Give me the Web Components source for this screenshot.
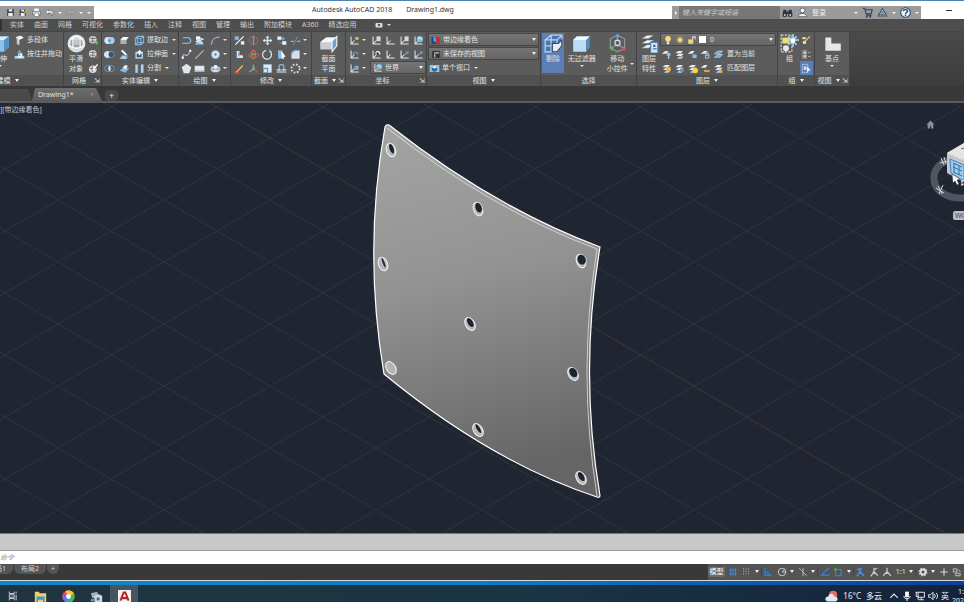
<!DOCTYPE html>
<html lang="zh-CN">
<head>
<meta charset="utf-8">
<title>Autodesk AutoCAD 2018 - Drawing1.dwg</title>
<style>
  body {
    margin: 0;
    min-height: 100vh;
    display: flex;
    flex-direction: column;
    overflow: hidden;
    background: #3a3a3a;
    color: #e2e2e2;
    font: 7px/10px "Noto Sans", "Noto Sans CJK SC", sans-serif;
  }
  cad-viewport { flex: 1; }
</style>
</head>
<body>
<cad-title-bar file="Drawing1.dwg">Autodesk AutoCAD 2018</cad-title-bar>
<cad-ribbon-tabs></cad-ribbon-tabs>
<cad-ribbon></cad-ribbon>
<cad-file-tabs>Drawing1*</cad-file-tabs>
<cad-viewport>][带边缘着色]</cad-viewport>
<cad-command-line></cad-command-line>
<cad-status-bar></cad-status-bar>
<win-taskbar></win-taskbar>

<script>
// all icons are drawn in a 16x16 box
const axes = '<path d="M3 2v11h11M3 13l5-5" fill="none" stroke="#dfe8ef" stroke-width="1.5"/>';
const sheets = '<path d="M2 6l4-3h7l-3 3zM3 10l4-3h7l-3 3z" fill="#e8e8e8"/><path d="M4 14l4-3h6l-3 3z" fill="#bcd"/>';
const icons = {
  save: '<path d="M2 2h12v12H2z" fill="#3f4850"/><path d="M5 2h6v4H5zM4 9h8v5H4z" fill="#e8eef2"/>',
  saveas: '<path d="M1 3h11v11H1z" fill="#3f4850"/><path d="M3 9h7v5H3zM4 3h5v3H4z" fill="#e8eef2"/><path d="M14 1l2 2-6 7-2 1 1-3z" fill="#e8a33c"/>',
  print: '<path d="M4 1h8v5H4z" fill="#fff"/><path d="M1 6h14v6H1z" fill="#e4e7ea" stroke="#4a5158"/><path d="M4 9h8v6H4z" fill="#fff" stroke="#5a6168"/>',
  undo: '<path d="M6 2L1 7l5 5V9c4-1 6 0 7 5 4-7-1-11-7-9z" fill="#f2f4f6" stroke="#4c555d"/>',
  redo: '<path d="M10 2l5 5-5 5V9c-4-1-6 0-7 5-4-7 1-11 7-9z" fill="#aaa" stroke="#828282"/>',
  glass: '<path d="M2 4h4l1 5v5H1V9zM10 4h4l1 5v5H9V9zM7 6h2v4H7z" fill="#2e343c"/><path d="M3 10h2v3H3zM11 10h2v3h-2z" fill="#ccd"/>',
  user: '<circle cx="8" cy="5" r="3.500" fill="#f3f5f7" stroke="#3b4652"/><path d="M2 14c0-6 12-6 12 0z" fill="#f3f5f7" stroke="#3b4652"/>',
  cart: '<path d="M1 2h3l2 8h7l2-6H5M6 12h8" fill="none" stroke="#28466b" stroke-width="1.600"/><circle cx="7" cy="14" r="1.500" fill="#28466b"/><circle cx="12" cy="14" r="1.500" fill="#28466b"/>',
  a360: '<path d="M8 2l6 11H2z" fill="#c7ced6" stroke="#34506f" stroke-width="1.500"/><path d="M2 9c4 4 9 4 12-1M8 6l-2 5h4z" fill="none" stroke="#34506f"/>',
  help: '<circle cx="8" cy="8" r="7" fill="#eef4fa" stroke="#28466b" stroke-width="1.500"/><path d="M5 6c0-3 6-3 6 0 0 2-3 2-3 4m0 1v2" fill="none" stroke="#28466b" stroke-width="2"/>',
  camera: '<rect x="1" y="4" width="14" height="9" rx="2" fill="#ddd"/><circle cx="8" cy="8" r="2.500" fill="#555"/>',
  extrude: '<path d="M1 5l4-3h10v9l-4 4H1z" fill="#8ec2ee"/><path d="M1 5l4-3h10l-4 3z" fill="#d8edfb"/><path d="M11 5l4-3v9l-4 4z" fill="#5590c4"/>',
  polysolid: '<path d="M3 3l7-2 4 3-6 3v8l-4-2V7z" fill="#c4ccd4"/><path d="M3 3l5 4 6-3-4-3z" fill="#f1f3f5"/>',
  presspull: '<path d="M1 10h14v4H1z" fill="#b5d4ee"/><path d="M6 6h6v7H6z" fill="#eef5fb"/><path d="M8 1l3 4H5zM7 5h2v5H7z" fill="#6fa8d8"/>',
  smooth: '<circle cx="8" cy="8" r="7.500" fill="#d9dcde"/><path d="M3 5h10v6H3z" fill="#9da3a8"/><path d="M2 8c0-8 12-8 12 0M5 2v9M11 2v9M1 9c4 4 10 4 14 0" fill="none" stroke="#fff" stroke-width="1"/><path d="M6 5h4v4H6z" fill="#c3c8cc"/>',
  meshadd: '<circle cx="7" cy="7" r="5.500" fill="#dedede"/><path d="M3 5h9M3 9h8M7 2v10" stroke="#555"/><path d="M10 11h5M12.500 9v5" stroke="#62c24c" stroke-width="2"/>',
  meshsub: '<circle cx="7" cy="7" r="5.500" fill="#dedede"/><path d="M3 5h9M3 9h8M7 2v10" stroke="#555"/><path d="M10 12h5" stroke="#d84b3c" stroke-width="2.500"/>',
  meshedit: '<circle cx="7" cy="9" r="5.500" fill="#dedede"/><path d="M3 8h8M6 4v9" stroke="#555"/><path d="M7 10l7-8" stroke="#fff" stroke-width="2"/>',
  union: '<ellipse cx="5.500" cy="8" rx="5" ry="5" fill="#d5e7f6"/><ellipse cx="10.500" cy="8" rx="5" ry="5" fill="#a9cdec"/><circle cx="8" cy="8" r="2" fill="#5c92c2"/>',
  subtract: '<circle cx="10.500" cy="8" r="4.500" fill="#38506a" stroke="#7fb0db"/><path d="M8 4a5 5 0 1 0 0 8c-2-2-2-6 0-8z" fill="#cfe3f4"/>',
  intersect: '<circle cx="5.500" cy="8" r="4.500" fill="none" stroke="#6fa6d6"/><circle cx="10.500" cy="8" r="4.500" fill="none" stroke="#6fa6d6"/><path d="M8 4c2 2 2 6 0 8-2-2-2-6 0-8z" fill="#e4f0fa"/>',
  slice: '<path d="M2 7l4-4h8l-3 4v6H2z" fill="#a8b2bb"/><path d="M2 7l4-4h8l-3 4z" fill="#fff"/>',
  thicken: '<path d="M1 14l4-5 9 2-4 4z" fill="#a9cdec"/><path d="M4 2l8 8" stroke="#fff" stroke-width="3"/><path d="M10 7l4 3-3 3z" fill="#4b85b8"/>',
  imprint: '<path d="M1 11l6-5 8 2-6 6z" fill="#88b6de"/><path d="M5 7l4-4 4 1-3 5z" fill="#eef4fa"/>',
  edges: '<path d="M2 5h8v9H2zM5 2h9v9h-9zM2 5l3-3M10 5l4-3M10 14l4-3M2 14l3-3" fill="none" stroke="#7fb7e6" stroke-width="1.500"/>',
  extface: '<path d="M2 4h11v10H2z" fill="#b9d8f2"/><path d="M4 7h7v5H4z" fill="#40566c"/><path d="M8 1l4 4H9v4H7V5H5z" fill="#fff"/>',
  separate: '<path d="M2 2h4v12H2zM10 2h4v12h-4z" fill="#b6d7f2"/><path d="M5 2h1v12H5zM13 2h1v12h-1z" fill="#5c92c2"/>',
  pline: '<path d="M2 12h8c6 0 5-8 0-8H3" fill="none" stroke="#9cc3e6" stroke-width="1.600"/>',
  helix: '<path d="M3 2h6v5H3z" fill="#fff"/><path d="M4 7h7l3 7H2z" fill="#8cb9e2"/><path d="M5 3l8 3-9 3 9 3" fill="none" stroke="#e8f3fc" stroke-width="1.500"/>',
  arc: '<path d="M2 14C2 7 7 3 14 3" fill="none" stroke="#9cc3e6" stroke-width="1.600"/>',
  spline: '<path d="M2 13C4 0 8 18 13 3" fill="none" stroke="#9cc3e6" stroke-width="1.600"/><path d="M1 11h3v3H1zM12 1h3v3h-3z" fill="#fff"/>',
  line: '<path d="M2 14L14 2" stroke="#9cc3e6" stroke-width="1.600"/>',
  circle: '<circle cx="8" cy="8" r="6" fill="#d4e2ee" stroke="#7fa9cf"/><circle cx="8" cy="8" r="1.500" fill="#456"/>',
  polygon: '<path d="M8 1l7 5-3 9H4L1 6z" fill="#dfe6ec"/>',
  rect: '<path d="M1 4h14v9H1z" fill="#dfe6ec"/><path d="M1 11h14v2H1z" fill="#8fb4d6"/>',
  ellipse: '<ellipse cx="8" cy="9" rx="7" ry="4.500" fill="#b8cfe4"/><path d="M6 3h4v9H6z" fill="#eef4fa"/><path d="M3 9h10" stroke="#4a6b8a"/>',
  mirror3: '<path d="M2 14L14 2" stroke="#fff" stroke-width="1.500"/><path d="M1 2h6v5H1z" fill="#8db9df"/><path d="M10 9h5v5h-5z" fill="#e9eef2"/>',
  rotate3: '<circle cx="8" cy="8" r="6" fill="none" stroke="#c05b4e" stroke-width="1.500"/><path d="M8 1v14" stroke="#5fa3dc" stroke-width="2"/>',
  move: '<path d="M8 1l3 3H9v3h3V5l3 3-3 3V9H9v3h2l-3 3-3-3h2V9H4v2L1 8l3-3v2h3V4H5z" fill="#d5e5f3"/>',
  copy: '<path d="M2 2h6v5H2zM9 9h6v5H9z" fill="#eef2f5"/><path d="M8 3l5 2-3 3zM4 9l5 4" stroke="#6fa6d6" fill="#6fa6d6"/>',
  trim: '<path d="M1 9h5m4 0h5" stroke="#9cc3e6" stroke-width="1.500"/><path d="M5 14l6-12" stroke="#6b93b8" stroke-width="1.500"/>',
  align: '<path d="M4 3h4v6h5v4H4z" fill="#dfe9f2"/><path d="M6 5h2v6H6z" fill="#6f9cc6"/>',
  gizmo: '<ellipse cx="8" cy="9" rx="7" ry="3" fill="none" stroke="#c6594b" stroke-width="1.500"/><ellipse cx="8" cy="8" rx="3" ry="6" fill="none" stroke="#d36a5c" stroke-width="1.500"/><path d="M6 8h4" stroke="#6cc05a" stroke-width="2"/>',
  rotate: '<path d="M6 2a6.500 6.500 0 1 0 5 1" fill="none" stroke="#dbe7f1" stroke-width="1.800"/><path d="M11 0v5h4z" fill="#9cc3e6"/>',
  stretch: '<path d="M3 2h6v12H3z" fill="#8cbbe6"/><path d="M8 3l6 8-3 1 1 3-4-2z" fill="#fff"/>',
  fillet: '<path d="M2 14V9c0-5 4-7 8-7h4v12z" fill="#d9e1e8"/><path d="M2 9c0-5 4-7 8-7" fill="none" stroke="#6fa6d6" stroke-width="2"/>',
  erase: '<path d="M2 13l9-9 3-2-2 4-8 8z" fill="#f0b04a"/><path d="M1 14h6" stroke="#e4563e" stroke-width="2"/>',
  scale3: '<path d="M8 2v7M8 9l-6 4" stroke="#6cc05a" stroke-width="2"/><path d="M8 9l6 4" stroke="#d84b3c" stroke-width="2"/><path d="M6 6h4v4H6z" fill="#68a1d4"/>',
  scale: '<path d="M2 2h12v12H2z" fill="#d9ebf9"/><path d="M2 7h7v7H2z" fill="#5b95c9"/><path d="M3 9h4v4H3z" fill="#e8f2fa"/>',
  offset: '<path d="M5 7c-4-6 10-6 6 0v3H5z" fill="none" stroke="#8fb9de" stroke-width="1.800"/><path d="M1 13h14M1 10h5m4 0h5" stroke="#dbe7f1" stroke-width="1.500"/>',
  array: '<circle cx="8" cy="8" r="6" fill="none" stroke="#dfe6ec" stroke-width="2.500" stroke-dasharray="2.500 2.200"/>',
  section: '<path d="M1 7l5-4h9l-4 4v6H1z" fill="#c9cdd1"/><path d="M1 7l5-4h9l-4 4z" fill="#f7f8f9"/><path d="M11 6l4-4v8l-4 5z" fill="#6fa0cc" stroke="#e8f2fa"/>',
  ucs: axes + '<path d="M9 3h5v4H9z" fill="#f1b640"/>',
  ucsback: axes + '<path d="M6 8c0-5 7-4 7 0" fill="none" stroke="#6fa6d6" stroke-width="1.500"/>',
  ucsdown: axes + '<path d="M8 4h6v6H8z" fill="#76abd9"/>',
  ucsface: axes + '<path d="M8 2h6v7H8z" fill="#d5d9dd"/>',
  ucsprev: axes + '<path d="M7 7c0-5 6-4 6 1" fill="none" stroke="#fff" stroke-width="1.500"/>',
  ucsorigin: axes,
  ucsz: axes + '<path d="M9 8l4-4m-3 0h3v3" fill="none" stroke="#5b9de0" stroke-width="1.800"/>',
  world: axes + '<circle cx="10" cy="6" r="4.500" fill="#78c2e4"/><path d="M7 5c3-4 3 3 6 0" fill="none" stroke="#e2f4fb" stroke-width="1.500"/>',
  visual: '<path d="M1 3h7v11H1z" fill="#203f8c"/><path d="M4 2l5 3v7l-5-2z" fill="#52a8e0"/><path d="M8 5c3-5 7-1 6 9H8z" fill="#c12d32"/>',
  view: '<path d="M2 3h12v11H2z" fill="#333"/><path d="M5 6h8M6 8v5" stroke="#c5c5c5" stroke-width="2"/>',
  vport: '<path d="M1 3h14v10H1z" fill="#95c6ee"/><path d="M4 6l4-2 4 2v5l-4 2-4-2z" fill="#2c6ca4"/><path d="M4 6l4 2 4-2-4-2z" fill="#e6f3fc"/>',
  cull: '<path d="M1 5l5-4h9v9l-4 5H1z" fill="#4c76ae"/><path d="M1 5l5-4h9M1 5v10h10V5zM6 1v14M1 10h10M11 5l4-4M15 1v9l-4 5M11 10l4-4" fill="none" stroke="#bfd4ee" stroke-width="1"/><path d="M7 8h5l3-3v5l-4 5H7z" fill="#e9edf2" stroke="#31486a"/>',
  cube: '<path d="M1 5l3-3h11l-3 3v10H1z" fill="#bcdcf5"/><path d="M1 5l3-3h11l-3 3z" fill="#effaff"/><path d="M12 5l3-3v9l-3 4z" fill="#548dc1"/>',
  gizmo3: '<path d="M8 1l6 3v8l-6 3-6-3V4zM8 1v5m0 3l6 3M8 9l-6 3" fill="none" stroke="#8f9aa5"/><path d="M6 6l2-1 2 1v3L8 10 6 9z" fill="none" stroke="#e4e4e4"/><path d="M7 0h2v3H7z" fill="#58a3e6"/><path d="M1 11l2 3 2-1-2-3z" fill="#59b650"/><path d="M12 12h3v2h-3z" fill="#e0493b"/>',
  layerprop: '<path d="M1 4l5-3h6l-5 3zM1 8l5-3h6L7 8zM1 12l5-3h6l-5 3z" fill="#f3f3f3" stroke="#666" stroke-width=".5"/><path d="M9 7h6v9H9z" fill="#dce8f4" stroke="#5585b8"/><path d="M11 9h2v2h-2zM11 12h3v1h-3z" fill="#3f6c9e"/>',
  bulb: '<circle cx="8" cy="6" r="4.500" fill="#f7df72"/><path d="M6 10h4v5H6z" fill="#ddd"/>',
  sun: '<circle cx="8" cy="8" r="3.500" fill="#f8e489"/><path d="M8 1v14M1 8h14M3 3l10 10M13 3L3 13" stroke="#efd86c"/>',
  lock: '<path d="M2 7h8v7H2z" fill="#edd777"/><path d="M9 7V3h4v4" fill="none" stroke="#d9d9d9" stroke-width="1.800"/>',
  layoff: '<path d="M1 7l5-4h5L8 7z" fill="#e8e8e8"/><circle cx="11" cy="8" r="3" fill="#8cc0ec"/><path d="M10 11h2v3h-2z" fill="#ddd"/>',
  layiso: sheets,
  layfrz: '<path d="M1 7l5-4h5L8 7z" fill="#e8e8e8"/><path d="M8 8h6v5H8z" fill="#8cc0ec"/>',
  laylock: '<path d="M1 7l5-4h5L8 7z" fill="#e8e8e8"/><path d="M8 9h5v4H8zM9 9V6h3v3" fill="none" stroke="#9cc3e6" stroke-width="1.500"/>',
  laycur: '<path d="M2 7l5-4h7l-4 4zM2 12l5-4h7l-4 4z" fill="#6da5d8" stroke="#c6dff2"/>',
  layon: sheets + '<circle cx="11" cy="9" r="3.500" fill="#eab53a"/>',
  layuniso: sheets + '<path d="M9 8h5v5H9z" fill="#5b95d0"/>',
  laythw: sheets + '<circle cx="12" cy="11" r="4" fill="#f2d352"/>',
  layulk: '<path d="M1 7l5-4h5L8 7z" fill="#e8e8e8"/><path d="M6 10h8v3H6z" fill="#dcaa38"/>',
  laymatch: sheets + '<path d="M9 9l4 5" stroke="#f0b04a" stroke-width="3"/>',
  group: '<path d="M1 1h9v14H1z" fill="none" stroke="#d6d6d6" stroke-dasharray="2 1"/><path d="M2 3h6v5H2z" fill="#ece07b"/><circle cx="5" cy="12" r="2.500" fill="#e8e8e8"/><path d="M11 0v11M6 5h10M7 2l7 7M14 2L7 9" stroke="#a6dcff" stroke-width="1.300"/><circle cx="11" cy="5.500" r="2" fill="#fff"/>',
  groupedit: '<path d="M2 3h5v3H2z" fill="#eee07b"/><circle cx="5" cy="11" r="2.500" fill="#ddd"/><path d="M6 9l7-7" stroke="#efc15a" stroke-width="2"/>',
  ungroup: '<path d="M2 2h6v12H2z" fill="none" stroke="#bbb" stroke-dasharray="2 1"/><path d="M4 4h3v3H4zM4 9h3v3H4zM10 5h4M10 11h4" fill="#ddd" stroke="#ccc"/>',
  groupsel: '<path d="M2 2h8v12H2z" fill="none" stroke="#e3effa" stroke-dasharray="2 1"/><path d="M4 5h4v5H4z" fill="#cde3f7"/><path d="M9 5l5 6-3 0-2 3z" fill="#fff"/>',
  base: '<path d="M2 3h5v5h8v6H2z" fill="#e7e7e7"/>',
  grid: '<path d="M4 2v12M8 2v12M12 2v12M2 5h12M2 11h12" stroke="#3d8be0" stroke-width="1.500"/>',
  snap: '<path d="M4 2v12M8 2v12M12 2v12" stroke="#aaa" stroke-width="1.500" stroke-dasharray="2 2"/>',
  ortho: '<path d="M3 2v11h11M3 8h5v5" fill="none" stroke="#2f86e4" stroke-width="1.800"/>',
  polar: '<circle cx="8" cy="8" r="6" fill="none" stroke="#ccc" stroke-width="1.500"/><path d="M8 8h7M8 8l5-5" stroke="#ccc" stroke-width="1.500"/>',
  iso: '<path d="M8 1v14M2 2l12 12" stroke="#bbb" stroke-width="1.500"/>',
  otrack: '<path d="M14 2L2 13h13" fill="none" stroke="#2f86e4" stroke-width="1.800"/>',
  osnap: '<path d="M4 4h9v10H4z" fill="none" stroke="#2f86e4" stroke-width="1.800"/><path d="M2 2h4v4H2z" fill="#41b04c"/>',
  annoOn: '<path d="M8 1v6l-5 8M8 7l6 7M5 10h6M3 4l8-1" fill="none" stroke="#3d95f0" stroke-width="2.300"/>',
  anno: '<path d="M8 1v6l-5 8M8 7l6 7M5 10h6M8 4l5-2" fill="none" stroke="#c9c9c9" stroke-width="2"/>',
  annoScale: '<path d="M8 1v6l-6 7M8 7l6 7M5 10h6" fill="none" stroke="#c9c9c9" stroke-width="2"/>',
  gear: '<circle cx="8" cy="8" r="4" fill="none" stroke="#ddd" stroke-width="3"/><circle cx="8" cy="8" r="6" fill="none" stroke="#ddd" stroke-width="2" stroke-dasharray="2.400 2.300"/>',
  plus: '<path d="M8 2v12M2 8h12" stroke="#d5d5d5" stroke-width="1.800"/>',
  isolate: '<path d="M2 3h6v5H2zM6 10h7v4H6zM10 4l4 4" fill="none" stroke="#ccc" stroke-width="1.400"/>',
  task: '<path d="M2 1v3h8V1M2 15v-3h8v3M2 6h8v4H2zM13 1v3M13 6v9" fill="none" stroke="#eee" stroke-width="1.300"/>',
  folder: '<path d="M1 2h5l1 2h8v11H1z" fill="#f6cf62"/><path d="M3 8h10v7h-2v-3H5v3H3z" fill="#3a97d8"/>',
  browser: '<circle cx="8" cy="8" r="7.500" fill="#f04a3e"/><path d="M8 8L4 1.500A7.500 7.500 0 0 1 15 5z" fill="#f7c62f"/><path d="M8 8l7-3a7.500 7.500 0 0 1-5 10.200z" fill="#3fbb56"/><path d="M8 8l2 7.200A7.500 7.500 0 0 1 1 11z" fill="#3a8ef0"/><path d="M8 8l-7 3A7.500 7.500 0 0 1 2 3.500z" fill="#b14be0"/><circle cx="8" cy="8" r="3" fill="#fff"/>',
  camcorder: '<path d="M1 4l8-2 1 6-7 2z" fill="#9fb3c0"/><path d="M5 8l5-3 5 2v8H6z" fill="#cdd7df"/><circle cx="10" cy="11" r="2" fill="#4b6d86"/><path d="M1 11h5v3H1z" fill="#7292a8"/>',
  acad: '<path d="M0 0h16v16H0z" fill="#f7f2f0"/><path d="M3 13L7 3h2l4 10M5 10h6" fill="none" stroke="#b5262b" stroke-width="2.500"/>',
  weather: '<circle cx="10" cy="6" r="5" fill="#e76a63"/><path d="M3 14c-4-1-3-6 1-6 1-5 7-4 7 0 5-1 6 5 2 6z" fill="#dce9f7"/>',
  chevron: '<path d="M2 11l6-6 6 6" fill="none" stroke="#eee" stroke-width="1.800"/>',
  mic: '<path d="M5 1h6v9H5z" fill="#fff"/><path d="M3 8c0 6 10 6 10 0M8 12v4" fill="none" stroke="#fff" stroke-width="1.500"/>',
  net: '<path d="M5 2h10v8H5zM10 10v4M6 14h8M1 2h4M2 2v7h3v5" fill="none" stroke="#eee" stroke-width="1.500"/>',
  volume: '<path d="M1 6h3l4-4v12l-4-4H1zM10 5c2 2 2 4 0 6M13 3c3 3 3 7 0 10" fill="none" stroke="#eee" stroke-width="1.500"/>',
  home: '<path d="M8 1l7 7h-2v7H9v-4H7v4H3V8H1z" fill="#8b9099"/>'
};

function define(name, html, setup) {
  const template = document.createElement('template');
  template.innerHTML = html;
  customElements.define(name, class extends HTMLElement {
    constructor() {
      super();
      this.attachShadow({ mode: 'open' });
      this.shadowRoot.appendChild(template.content.cloneNode(true));
    }
    connectedCallback() {
      if (setup) setup(this, this.shadowRoot);
    }
  });
}

define('cad-icon', `
  <style>
    :host { display: block; flex: none; width: var(--icon, 11px); height: var(--icon, 11px); }
    svg { display: block; width: 100%; height: 100%; }
  </style>
  <svg viewBox="0 0 16 16" aria-hidden="true"></svg>
`, (el, root) => {
  root.querySelector('svg').innerHTML = icons[el.getAttribute('name')] || '';
});

// a button of the ribbon: small by default, "large" puts the text under the icon
define('cad-tool', `
  <style>
    :host { display: block; }
    button {
      all: unset;
      box-sizing: border-box;
      display: flex;
      align-items: center;
      gap: 2px;
      width: 100%;
      height: 14px;
      padding: 0 1px;
      white-space: nowrap;
    }
    .arrow { display: none; flex: none; border: 2px solid transparent; border-top-color: #e4e4e4; border-bottom: 0; }
    :host([arrow]) .arrow { display: block; }
    :host([large]) button { flex-direction: column; gap: 1px; height: 40px; padding: 1px 0; text-align: center; --icon: 19px; }
    :host([active]) button { background: #5b7fb4; }
    :host([side]) button { position: relative; }
    :host([side]) .arrow { position: absolute; right: 1px; top: 30px; }
  </style>
  <button type="button"><slot></slot><span class="arrow"></span></button>
`, (el, root) => {
  const button = root.querySelector('button');
  const icon = document.createElement('cad-icon');
  icon.setAttribute('name', el.getAttribute('icon'));
  button.prepend(icon);
  button.setAttribute('aria-label', el.textContent || el.getAttribute('icon'));
});

define('cad-select', `
  <style>
    :host { display: block; min-width: 0; }
    label {
      display: flex;
      align-items: center;
      box-sizing: border-box;
      height: 13px;
      padding: 0 2px;
      gap: 2px;
      border: 1px solid #464646;
      background: linear-gradient(#757575, #656565);
    }
    select { all: unset; flex: 1; min-width: 0; height: 11px; line-height: 11px; }
    .arrow { border: 2px solid transparent; border-top: 3px solid #eee; border-bottom: 0; }
    ::slotted(cad-icon) { --icon: 10px; }
  </style>
  <label><slot></slot><select></select><span class="arrow"></span></label>
`, (el, root) => {
  const select = root.querySelector('select');
  select.add(new Option(el.getAttribute('value')));
  select.setAttribute('aria-label', el.getAttribute('name'));
});

define('cad-panel', `
  <style>
    :host { display: flex; flex-direction: column; flex: none; box-sizing: border-box; border-right: 1px solid #434343; background: #5c5c5c; }
    .body { display: flex; height: 42px; padding: 1px 1px 0; }
    footer { display: flex; align-items: center; height: 11px; background: #515151; }
    .name { flex: 1; display: flex; justify-content: center; align-items: center; gap: 4px; }
    .arrow { border: 2px solid transparent; border-top: 3px solid #eee; border-bottom: 0; }
    :host([plain]) .arrow, .launch { display: none; }
    :host([launch]) .launch { display: block; width: 7px; }
  </style>
  <div class="body"><slot></slot></div>
  <footer><span class="name"><span></span><i class="arrow"></i></span><span class="launch">⇲</span></footer>
`, (el, root) => {
  root.querySelector('.name span').textContent = el.getAttribute('label');
});

define('cad-title-bar', `
  <style>
    :host { display: flex; align-items: flex-end; height: 18px; border-top: 1px solid #4d83b4; background: #fff; --icon: 9px; }
    .bar { display: flex; align-items: center; box-sizing: border-box; height: 13px; background: #9b9b9b; }
    button { all: unset; }
    .quick { width: 94px; gap: 4px; padding-left: 6px; }
    .arrow { border: 2px solid transparent; border-top-color: #f4f4f4; border-bottom: 0; }
    h1 { flex: 1; margin: 0; display: flex; justify-content: center; gap: 14px; font: inherit; line-height: 17px; align-self: flex-start; color: #333; white-space: nowrap; }
    .search { width: 108px; background: #777; }
    .search i { align-self: stretch; width: 7px; background: #9b9b9b; display: flex; align-items: center; justify-content: center; }
    .search i::after { content: ""; border: 2px solid transparent; border-left-color: #fff; border-right: 0; }
    input { all: unset; flex: 1; min-width: 0; padding-left: 3px; font: italic 7px/11px "Noto Sans CJK SC", sans-serif; }
    input::placeholder { color: #ccc; }
    .account { width: 141px; gap: 4px; padding: 0 2px; color: #eee; --icon: 11px; }
    .sign { flex: 1; }
    .window { width: 43px; height: 18px; display: flex; align-items: center; justify-content: flex-end; }
    .window button { width: 6px; height: 1px; margin: 0 12px 0 0; background: #333; }
  </style>
  <div class="bar quick">
    <button aria-label="保存"><cad-icon name="save"></cad-icon></button>
    <button aria-label="另存为"><cad-icon name="saveas"></cad-icon></button>
    <button aria-label="打印"><cad-icon name="print"></cad-icon></button>
    <button aria-label="放弃"><cad-icon name="undo"></cad-icon></button>
    <span class="arrow"></span>
    <button aria-label="重做"><cad-icon name="redo"></cad-icon></button>
    <span class="arrow"></span>
    <span class="arrow"></span>
  </div>
  <h1><slot></slot><span class="file"></span></h1>
  <div class="bar search"><i></i><input type="text" aria-label="搜索" placeholder="键入关键字或短语"></div>
  <div class="bar account">
    <button aria-label="搜索"><cad-icon name="glass"></cad-icon></button>
    <cad-icon name="user"></cad-icon>
    <button class="sign">登录</button>
    <span class="arrow"></span>
    <button aria-label="商店"><cad-icon name="cart"></cad-icon></button>
    <button aria-label="A360"><cad-icon name="a360"></cad-icon></button>
    <span class="arrow"></span>
    <button aria-label="帮助"><cad-icon name="help"></cad-icon></button>
    <span class="arrow"></span>
  </div>
  <div class="window"><button aria-label="最小化"></button></div>
`, (el, root) => {
  root.querySelector('.file').textContent = el.getAttribute('file');
});

define('cad-ribbon-tabs', `
  <style>
    :host { display: flex; align-items: center; gap: 10px; height: 12px; padding-left: 8px; background: #4e4e4e; border-left: 2px solid #333; box-sizing: border-box; color: #cfcfcf; }
    a { color: inherit; text-decoration: none; white-space: nowrap; }
    .more { display: flex; align-items: center; gap: 4px; margin-left: 8px; --icon: 8px; }
    .more::after { content: ""; border: 2px solid transparent; border-top-color: #ddd; border-bottom: 0; }
  </style>
  <a href="#">实体</a><a href="#">曲面</a><a href="#">网格</a><a href="#">可视化</a><a href="#">参数化</a>
  <a href="#">插入</a><a href="#">注释</a><a href="#">视图</a><a href="#">管理</a><a href="#">输出</a>
  <a href="#">附加模块</a><a href="#">A360</a><a href="#">精选应用</a>
  <span class="more"><cad-icon name="camera"></cad-icon></span>
`);

define('cad-ribbon', `
  <style>
    :host { display: block; overflow: hidden; background: linear-gradient(#4a4a4a, #3c3c3c); border-top: 1px solid #464646; }
    /* the ribbon is scrolled a little to the right */
    .strip { display: flex; margin-left: -48px; }
    .grid { display: grid; grid-auto-rows: 14px; align-content: start; }
    .stack { display: flex; flex-direction: column; gap: 1px; flex: 1; min-width: 0; }
    .rows { display: flex; flex-direction: column; }
    .w112 { width: 112px; } .w38 { width: 38px; } .w77 { width: 77px; } .w52 { width: 52px; }
    .w81 { width: 81px; } .w34 { width: 34px; } .w114 { width: 114px; } .w96 { width: 96px; }
    .w141 { width: 141px; } .w37 { width: 37px; } .w35 { width: 35px; }
    .big { width: 22px; } .fill { flex: 1; }
    .wide { grid-column: 2 / -1; }
    .edit { grid-template-columns: 15px 15px auto; }
    .draw { grid-template-columns: 13px 16px auto; }
    .modify { grid-template-columns: repeat(4, 14px) auto; padding-left: 1px; }
    .coords { grid-template-columns: 22px repeat(4, 14px); padding-left: 1px; }
    .layers { grid-template-columns: repeat(5, 13px) auto; }
    .text { padding-left: 2px; line-height: 14px; }
    .swatch { width: 7px; height: 7px; margin-right: 2px; background: #fff; }
    .model { padding-left: 36px; display: flex; gap: 2px; }
  </style>
  <div class="strip">
    <cad-panel class="w112" label="建模">
      <div class="model">
        <cad-tool class="big" large arrow icon="extrude">拉伸</cad-tool>
        <div class="rows">
          <cad-tool icon="polysolid">多段体</cad-tool>
          <cad-tool icon="presspull">按住并拖动</cad-tool>
        </div>
      </div>
    </cad-panel>
    <cad-panel class="w38" label="网格" plain launch>
      <cad-tool class="big" large icon="smooth">平滑<br>对象</cad-tool>
      <div class="rows"><cad-tool icon="meshadd"></cad-tool><cad-tool icon="meshsub"></cad-tool><cad-tool icon="meshedit"></cad-tool></div>
    </cad-panel>
    <cad-panel class="w77" label="实体编辑">
      <div class="grid edit">
        <cad-tool icon="union"></cad-tool><cad-tool icon="slice"></cad-tool><cad-tool icon="edges" arrow>提取边&nbsp;</cad-tool>
        <cad-tool icon="subtract"></cad-tool><cad-tool icon="thicken"></cad-tool><cad-tool icon="extface" arrow>拉伸面&nbsp;</cad-tool>
        <cad-tool icon="intersect"></cad-tool><cad-tool icon="imprint"></cad-tool><cad-tool icon="separate" arrow>分割&nbsp;</cad-tool>
      </div>
    </cad-panel>
    <cad-panel class="w52" label="绘图">
      <div class="grid draw">
        <cad-tool icon="pline"></cad-tool><cad-tool icon="helix"></cad-tool><cad-tool icon="arc" arrow></cad-tool>
        <cad-tool icon="spline"></cad-tool><cad-tool icon="line"></cad-tool><cad-tool icon="circle" arrow></cad-tool>
        <cad-tool icon="polygon"></cad-tool><cad-tool icon="rect"></cad-tool><cad-tool icon="ellipse" arrow></cad-tool>
      </div>
    </cad-panel>
    <cad-panel class="w81" label="修改">
      <div class="grid modify">
        <cad-tool icon="mirror3"></cad-tool><cad-tool icon="rotate3"></cad-tool><cad-tool icon="move"></cad-tool><cad-tool icon="copy"></cad-tool><cad-tool icon="trim" arrow></cad-tool>
        <cad-tool icon="align"></cad-tool><cad-tool icon="gizmo"></cad-tool><cad-tool icon="rotate"></cad-tool><cad-tool icon="stretch"></cad-tool><cad-tool icon="fillet" arrow></cad-tool>
        <cad-tool icon="erase"></cad-tool><cad-tool icon="scale3"></cad-tool><cad-tool icon="scale"></cad-tool><cad-tool icon="offset"></cad-tool><cad-tool icon="array" arrow></cad-tool>
      </div>
    </cad-panel>
    <cad-panel class="w34" label="截面" launch>
      <cad-tool class="fill" large icon="section">截面<br>平面</cad-tool>
    </cad-panel>
    <cad-panel class="w81" label="坐标" plain launch>
      <div class="grid coords">
        <cad-tool icon="ucs" arrow></cad-tool><cad-tool icon="ucsface"></cad-tool><cad-tool icon="ucsorigin"></cad-tool><cad-tool icon="ucsface"></cad-tool><cad-tool icon="world"></cad-tool>
        <cad-tool icon="ucsback" arrow></cad-tool><cad-tool icon="ucsprev"></cad-tool><cad-tool icon="ucsorigin"></cad-tool><cad-tool icon="ucsz"></cad-tool><cad-tool icon="ucsz"></cad-tool>
        <cad-tool icon="ucsdown" arrow></cad-tool><cad-select class="wide" name="坐标系" value="世界"><cad-icon name="world"></cad-icon></cad-select>
      </div>
    </cad-panel>
    <cad-panel class="w114" label="视图">
      <div class="stack">
        <cad-select name="视觉样式" value="带边缘着色"><cad-icon name="visual"></cad-icon></cad-select>
        <cad-select name="命名视图" value="未保存的视图"><cad-icon name="view"></cad-icon></cad-select>
        <cad-tool icon="vport" arrow>单个视口&nbsp;</cad-tool>
      </div>
    </cad-panel>
    <cad-panel class="w96" label="选择" plain>
      <cad-tool class="big" large active icon="cull">剔除</cad-tool>
      <cad-tool class="fill" large arrow icon="cube">无过滤器</cad-tool>
      <cad-tool class="fill" large arrow side icon="gizmo3">移动<br>小控件</cad-tool>
    </cad-panel>
    <cad-panel class="w141" label="图层">
      <cad-tool class="big" large icon="layerprop">图层<br>特性</cad-tool>
      <div class="stack">
        <cad-select name="图层" value="0"><cad-icon name="bulb"></cad-icon><cad-icon name="sun"></cad-icon><cad-icon name="lock"></cad-icon><span class="swatch"></span></cad-select>
        <div class="grid layers">
          <cad-tool icon="layoff"></cad-tool><cad-tool icon="layiso"></cad-tool><cad-tool icon="layfrz"></cad-tool><cad-tool icon="laylock"></cad-tool><cad-tool icon="laycur"></cad-tool><span class="text">置为当前</span>
          <cad-tool icon="layon"></cad-tool><cad-tool icon="layuniso"></cad-tool><cad-tool icon="laythw"></cad-tool><cad-tool icon="layulk"></cad-tool><cad-tool icon="laymatch"></cad-tool><span class="text">匹配图层</span>
        </div>
      </div>
    </cad-panel>
    <cad-panel class="w37" label="组">
      <cad-tool class="big" large icon="group">组</cad-tool>
      <div class="rows"><cad-tool icon="groupedit"></cad-tool><cad-tool icon="ungroup"></cad-tool><cad-tool active icon="groupsel"></cad-tool></div>
    </cad-panel>
    <cad-panel class="w35" label="视图" launch>
      <cad-tool class="fill" large arrow icon="base">基点</cad-tool>
    </cad-panel>
  </div>
`);

define('cad-file-tabs', `
  <style>
    :host { display: flex; align-items: flex-end; height: 15px; background: #383838; border-bottom: 2px solid #5c5c5c; }
    .start { width: 32px; height: 12px; background: #4a4a4a; clip-path: polygon(0 0, 28px 0, 100% 100%, 0 100%); }
    .file { display: flex; align-items: center; justify-content: space-between; box-sizing: border-box; width: 70px; height: 13px; padding: 0 8px 0 6px; background: linear-gradient(#6d6d6d, #5c5c5c); clip-path: polygon(3px 0, 64px 0, 100% 100%, 0 100%); }
    button { all: unset; }
    .close { color: #999; }
    .add { width: 13px; height: 11px; margin-left: 3px; border-radius: 4px; background: #4a4a4a; text-align: center; font-size: 9px; line-height: 10px; }
  </style>
  <span class="start"></span>
  <div class="file"><slot></slot><button class="close" aria-label="关闭">×</button></div>
  <button class="add" aria-label="新建">+</button>
`);

// the node of the major grid sits at 58,35 and repeats every 106 x 62
define('cad-viewport', `
  <style>
    :host { display: block; position: relative; overflow: hidden; min-height: 430px; background: #1f2632; }
    .scene { position: absolute; inset: 0; width: 100%; height: 100%; }
    .caption { position: absolute; left: 0; top: 2px; color: #c5cad2; }
    .home { position: absolute; right: 29px; top: 17px; --icon: 9px; }
    .cube { position: absolute; right: 0; top: 36px; width: 36px; height: 64px; }
    .wcs { all: unset; position: absolute; right: -12px; top: 108px; width: 21px; height: 9px; padding-left: 2px; border-radius: 2px; background: #b9bcc2; color: #444; line-height: 9px; }
  </style>
  <svg class="scene" aria-hidden="true">
    <defs>
      <pattern id="grid" x="58" y="35" width="106" height="62" patternUnits="userSpaceOnUse">
        <g id="minor" stroke="#212834" stroke-width="1" fill="none"></g>
        <path d="M0 0l106 62M0 62L106 0" stroke="#2b323d"/>
      </pattern>
      <linearGradient id="steel" x1="0" y1="0" x2="0.150" y2="1">
        <stop offset="0" stop-color="#a3a5a3"/>
        <stop offset="0.450" stop-color="#929392"/>
        <stop offset="1" stop-color="#656565"/>
      </linearGradient>
    </defs>
    <rect width="100%" height="100%" fill="url(#grid)"/>
    <path d="M210 0l740 433" stroke="#4a2b33"/>
    <path d="M385 24Q386 21 389 22Q493 104 600 144Q579 269 600 393Q599 395 597 394Q491 359 384 271Q363 147 385 24z" fill="url(#steel)" stroke="#fff" stroke-width="1.200"/>
    <path d="M387 25Q492 107 597 146Q577 269 597 393" fill="none" stroke="#e0e0e0" stroke-width=".8"/>
    <g id="holes" stroke="#f4f4f4"></g>
  </svg>
  <span class="caption"><slot></slot></span>
  <cad-icon class="home" name="home"></cad-icon>
  <svg class="cube" viewBox="0 0 36 64" aria-hidden="true">
    <path d="M42 20C24 16 6 24 6 39c0 15 18 23 36 19" fill="none" stroke="#50555f" stroke-width="7"/>
    <path d="M13 19l3 7M16 18l2 7M12 24l8-2M8 49l8 5M10 47l4 8M15 46l-4 9" stroke="#d3d6da"/>
    <path d="M19 14L36 4v39L19 34z" fill="#c5c6c8"/>
    <path d="M19 14L36 4v14l-1 3z" fill="#e8e5e0"/>
    <path d="M22 20l14 6v16l-13-8z" fill="#9ccbed" stroke="#3f83bd"/>
    <path d="M25 24l9 4M25 28l9 4M26 24v9M31 27v9M25 33l9 4M33 10l3-1" stroke="#3d6f9c" fill="none"/>
    <path d="M24 35l1 9 2-2 2 4 2-1-2-4 3-1z" fill="#fff" stroke="#333" stroke-width=".5"/>
    <path d="M33 43l3-2M33 46l3-1M34 41v6" stroke="#ddd"/>
  </svg>
  <button class="wcs">WCS</button>
`, (el, root) => {
  const ns = 'http://www.w3.org/2000/svg';
  const draw = (parent, tag, attrs) => {
    const node = document.createElementNS(ns, tag);
    for (const key in attrs) node.setAttribute(key, attrs[key]);
    parent.appendChild(node);
  };
  const minor = root.querySelector('#minor');
  for (let i = -4; i < 10; i++) {
    const y = i * 62 / 5;
    draw(minor, 'path', { d: `M0 ${y}l106 62M0 ${y}l106 -62` });
  }
  // x, y, width of the see-through part
  const holes = [
    [391, 47, 2.5], [478, 106, 3.5], [581, 158, 4.5],
    [383, 161, 1.5], [470, 221, 3], [573, 271, 4],
    [391, 265, 0], [478, 327, 2], [581, 375, 3]
  ];
  const group = root.querySelector('#holes');
  holes.forEach(([x, y, gap]) => {
    const turn = `rotate(${y > 200 ? -32 : -20} ${x} ${y})`;
    draw(group, 'ellipse', { cx: x, cy: y, rx: 4.5, ry: 7, fill: '#b4b4b4', transform: turn });
    if (gap) draw(group, 'ellipse', { cx: x + 1, cy: y - 1, rx: gap, ry: 5.5, fill: '#1c2430', 'stroke-width': 0.6, transform: turn });
  });
});

define('cad-command-line', `
  <style>
    :host { display: block; background: #c8c8c8; border-top: 1px solid #777; }
    .history { height: 16px; border-bottom: 1px solid #999; }
    input { all: unset; display: block; box-sizing: border-box; width: 100%; height: 13px; margin-left: -14px; background: #fff; font-style: italic; box-shadow: 14px 0 #fff; line-height: 11px; }
    input::placeholder { color: #999; }
  </style>
  <div class="history"></div>
  <input type="text" aria-label="命令" placeholder="键入命令">
`);

define('cad-status-bar', `
  <style>
    :host { display: flex; height: 16px; border-bottom: 1px solid #d8d8d8; background: #393939; overflow: hidden; }
    button { all: unset; box-sizing: border-box; height: 10px; }
    .layouts { flex: 1; display: flex; margin-left: -19px; }
    .layouts button { padding: 0 7px; background: #555; border-radius: 0 0 6px 6px; margin-right: 1px; color: #d5d5d5; }
    .layouts button:last-child { padding: 0 4px; }
    .tools { display: flex; align-items: center; box-sizing: border-box; width: 256px; padding-bottom: 1px; background: #545454; --icon: 10px; }
    .tools > * { flex: 1 1 auto; display: flex; justify-content: center; }
    .tools > .model { flex: none; width: 17px; margin-right: 1px; background: #686868; color: #fff; }
    .arrow::after { content: ""; border: 2px solid transparent; border-top: 3px solid #eee; border-bottom: 0; }
    .line { border-left: 1px solid #444; }
  </style>
  <div class="layouts"><button>布局1</button><button>布局2</button><button aria-label="新建布局">+</button></div>
  <div class="tools">
    <button class="model">模型</button>
    <button aria-label="栅格"><cad-icon name="grid"></cad-icon></button>
    <button aria-label="捕捉"><cad-icon name="snap"></cad-icon></button><span class="arrow"></span>
    <button class="line" aria-label="正交"><cad-icon name="ortho"></cad-icon></button>
    <button aria-label="极轴"><cad-icon name="polar"></cad-icon></button><span class="arrow"></span>
    <button aria-label="等轴测"><cad-icon name="iso"></cad-icon></button><span class="arrow"></span>
    <button class="line" aria-label="对象追踪"><cad-icon name="otrack"></cad-icon></button>
    <button aria-label="对象捕捉"><cad-icon name="osnap"></cad-icon></button><span class="arrow"></span>
    <button class="line" aria-label="注释可见性"><cad-icon name="annoOn"></cad-icon></button>
    <button aria-label="自动缩放"><cad-icon name="anno"></cad-icon></button>
    <button aria-label="注释比例"><cad-icon name="annoScale"></cad-icon></button>
    <button>1:1</button><span class="arrow"></span>
    <button class="line" aria-label="设置"><cad-icon name="gear"></cad-icon></button><span class="arrow"></span>
    <button aria-label="添加"><cad-icon name="plus"></cad-icon></button>
    <button aria-label="隔离"><cad-icon name="isolate"></cad-icon></button>
  </div>
`);

define('win-taskbar', `
  <style>
    :host { display: block; height: 21px; overflow: hidden; background: linear-gradient(90deg, #20343f, #1b3443 55%, #14233c); color: #f0f0f0; font-size: 8px; }
    .edge { height: 4px; background: linear-gradient(90deg, #0e88c9, #0b7cc6 50%, #0a3f9c); }
    .bar { display: flex; height: 22px; }
    button { all: unset; display: flex; align-items: center; justify-content: center; width: 28px; --icon: 13px; }
    button:first-child { width: 26px; --icon: 10px; }
    .active { background: #46565f; }
    .space { flex: 1; }
    .tray { display: flex; align-items: center; gap: 3px; --icon: 10px; }
    .weather { display: flex; align-items: center; gap: 5px; margin-right: 4px; --icon: 13px; }
    .clock { font-size: 7px; text-align: right; line-height: 9px; }
  </style>
  <div class="edge"></div>
  <div class="bar">
    <button aria-label="任务视图"><cad-icon name="task"></cad-icon></button>
    <button aria-label="文件资源管理器"><cad-icon name="folder"></cad-icon></button>
    <button aria-label="浏览器"><cad-icon name="browser"></cad-icon></button>
    <button aria-label="录像"><cad-icon name="camcorder"></cad-icon></button>
    <button class="active" aria-label="AutoCAD"><cad-icon name="acad"></cad-icon></button>
    <span class="space"></span>
    <div class="tray">
      <span class="weather"><cad-icon name="weather"></cad-icon><span>16°C</span><span>多云</span></span>
      <cad-icon name="chevron"></cad-icon>
      <cad-icon name="mic"></cad-icon>
      <cad-icon name="net"></cad-icon>
      <cad-icon name="volume"></cad-icon>
      <span>英</span>
      <span class="clock">1:<br>202</span>
    </div>
  </div>
`);
</script>
</body>
</html>
